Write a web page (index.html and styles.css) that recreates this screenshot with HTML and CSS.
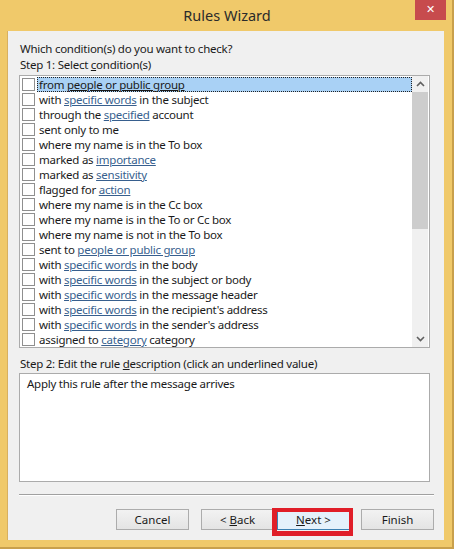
FILE: index.html
```html
<!DOCTYPE html>
<html lang="en">
<head>
<meta charset="utf-8">
<title>Rules Wizard</title>
<link rel="stylesheet" href="styles.css">
</head>
<body>
<div class="window">
  <div class="titlebar">
    <span></span>
    <span class="title">Rules Wizard</span>
    <span class="close">&#x2715;</span>
  </div>
  <div class="client">
    <div class="label">Which condition(s) do you want to check?</div>
    <div class="label">Step 1: Select <u>c</u>ondition(s)</div>
    <div class="listbox">
      <ul class="items">
        <li class="row"><span class="cb"></span><span class="txt selected">from <u>people or public group</u></span></li>
        <li class="row"><span class="cb"></span><span class="txt">with <a>specific words</a> in the subject</span></li>
        <li class="row"><span class="cb"></span><span class="txt">through the <a>specified</a> account</span></li>
        <li class="row"><span class="cb"></span><span class="txt">sent only to me</span></li>
        <li class="row"><span class="cb"></span><span class="txt">where my name is in the To box</span></li>
        <li class="row"><span class="cb"></span><span class="txt">marked as <a>importance</a></span></li>
        <li class="row"><span class="cb"></span><span class="txt">marked as <a>sensitivity</a></span></li>
        <li class="row"><span class="cb"></span><span class="txt">flagged for <a>action</a></span></li>
        <li class="row"><span class="cb"></span><span class="txt">where my name is in the Cc box</span></li>
        <li class="row"><span class="cb"></span><span class="txt">where my name is in the To or Cc box</span></li>
        <li class="row"><span class="cb"></span><span class="txt">where my name is not in the To box</span></li>
        <li class="row"><span class="cb"></span><span class="txt">sent to <a>people or public group</a></span></li>
        <li class="row"><span class="cb"></span><span class="txt">with <a>specific words</a> in the body</span></li>
        <li class="row"><span class="cb"></span><span class="txt">with <a>specific words</a> in the subject or body</span></li>
        <li class="row"><span class="cb"></span><span class="txt">with <a>specific words</a> in the message header</span></li>
        <li class="row"><span class="cb"></span><span class="txt">with <a>specific words</a> in the recipient's address</span></li>
        <li class="row"><span class="cb"></span><span class="txt">with <a>specific words</a> in the sender's address</span></li>
        <li class="row"><span class="cb"></span><span class="txt">assigned to <a>category</a> category</span></li>
      </ul>
      <div class="scrollbar">
        <div class="arrow">
          <svg width="9" height="6" viewBox="0 0 9 6"><path d="M1 5 L4.5 1.5 L8 5" fill="none" stroke="#606060" stroke-width="1.6"/></svg>
        </div>
        <div class="thumb"></div>
        <div class="track"></div>
        <div class="arrow">
          <svg width="9" height="6" viewBox="0 0 9 6"><path d="M1 1 L4.5 4.5 L8 1" fill="none" stroke="#606060" stroke-width="1.6"/></svg>
        </div>
      </div>
    </div>
    <div class="label step2">Step 2: Edit the rule <u>d</u>escription (click an underlined value)</div>
    <div class="desc">Apply this rule after the message arrives</div>
    <div class="separator"></div>
    <div class="buttons">
      <button class="btn">Cancel</button>
      <button class="btn back">&lt; <u>B</u>ack</button>
      <span class="highlight"><button class="btn next"><u>N</u>ext &gt;</button></span>
      <button class="btn finish">Finish</button>
    </div>
  </div>
</div>
</body>
</html>
```
FILE: styles.css
```css
* { box-sizing: border-box; }
html, body { margin: 0; padding: 0; }
body {
  width: 454px;
  height: 549px;
  overflow: hidden;
  font-family: "Noto Sans", "Open Sans", sans-serif;
  font-size: 11.5px;
  letter-spacing: -0.25px;
  color: #1a1a1a;
}
.window {
  width: 454px;
  height: 549px;
  background: #f0c96a;
  border-right: 2px solid #c9a04c;
  border-bottom: 2px solid #c9a04c;
  display: flex;
  flex-direction: column;
}
.titlebar {
  height: 31px;
  display: grid;
  grid-template-columns: 1fr auto 1fr;
  align-items: start;
}
.title {
  font-size: 14.5px;
  letter-spacing: 0;
  color: #2b2b2b;
  line-height: 30px;
  margin-left: 2px;
}
.close {
  justify-self: end;
  width: 31px;
  height: 20px;
  margin-right: 6px;
  background: #c74b4d;
  color: #fff;
  font-size: 11px;
  font-weight: bold;
  line-height: 20px;
  text-align: center;
  font-family: "DejaVu Sans", sans-serif;
}
.client {
  margin: 0 8px 0 7px;
  height: 509px;
  background: #f0f0f0;
  border-left: 1px solid #d8b060;
  padding: 10px 10px 0 11px;
  display: flex;
  flex-direction: column;
}
.label {
  line-height: 16px;
  padding-left: 1px;
  white-space: nowrap;
}
.listbox {
  margin-top: 2px;
  margin-right: 4px;
  height: 273px;
  border: 1px solid #ababab;
  background: #fff;
  display: flex;
}
.items {
  list-style: none;
  margin: 0;
  padding: 1px 0 0 2px;
  flex: 1;
  min-width: 0;
}
.row {
  height: 15px;
  display: flex;
  align-items: center;
}
.cb {
  width: 13px;
  height: 13px;
  border: 1px solid #8f8f8f;
  background: #fff;
  flex: none;
}
.txt {
  flex: 1;
  height: 15px;
  line-height: 13px;
  padding: 0 0 0 1px;
  margin-left: 2px;
  white-space: nowrap;
  border: 1px dotted transparent;
}
.txt.selected {
  background: #a9d1f5;
  border: 1px dotted #222;
}
a, u { text-decoration: underline; }
a { color: #375f8e; }
.scrollbar {
  width: 16px;
  margin-right: 1px;
  background: #f0f0f0;
  display: flex;
  flex-direction: column;
}
.arrow {
  height: 16px;
  display: flex;
  align-items: center;
  justify-content: center;
}
.thumb {
  height: 137px;
  background: #cdcdcd;
}
.track { flex: 1; }
.step2 { margin-top: 8px; }
.desc {
  margin-top: 1px;
  margin-right: 4px;
  height: 109px;
  border: 1px solid #ababab;
  background: #fff;
  padding: 2px 7px;
  line-height: 16px;
}
.separator {
  margin-top: 12px;
  height: 2px;
  border-top: 1px solid #a0a0a0;
  border-bottom: 1px solid #fff;
}
.buttons {
  margin-top: 13px;
  display: flex;
  justify-content: flex-end;
  align-items: center;
}
.btn {
  width: 73px;
  height: 21px;
  font-family: inherit;
  font-size: 11.5px;
  letter-spacing: 0;
  color: #1a1a1a;
  background: linear-gradient(#f2f2f2, #e4e4e4);
  border: 1px solid #acacac;
  border-radius: 0;
  padding: 0;
}
.back { margin-left: 12px; }
.highlight {
  position: relative;
  margin-left: 3px;
  display: flex;
}
.highlight::after {
  content: "";
  position: absolute;
  left: -5px;
  right: -3px;
  top: -1px;
  bottom: -6px;
  border: 4px solid #e01e28;
  border-bottom-width: 5px;
  border-left-width: 5px;
}
.next {
  background: #e5f1fb;
  border-color: #3c7fb1;
}
.finish { margin-left: 11px; }
```
